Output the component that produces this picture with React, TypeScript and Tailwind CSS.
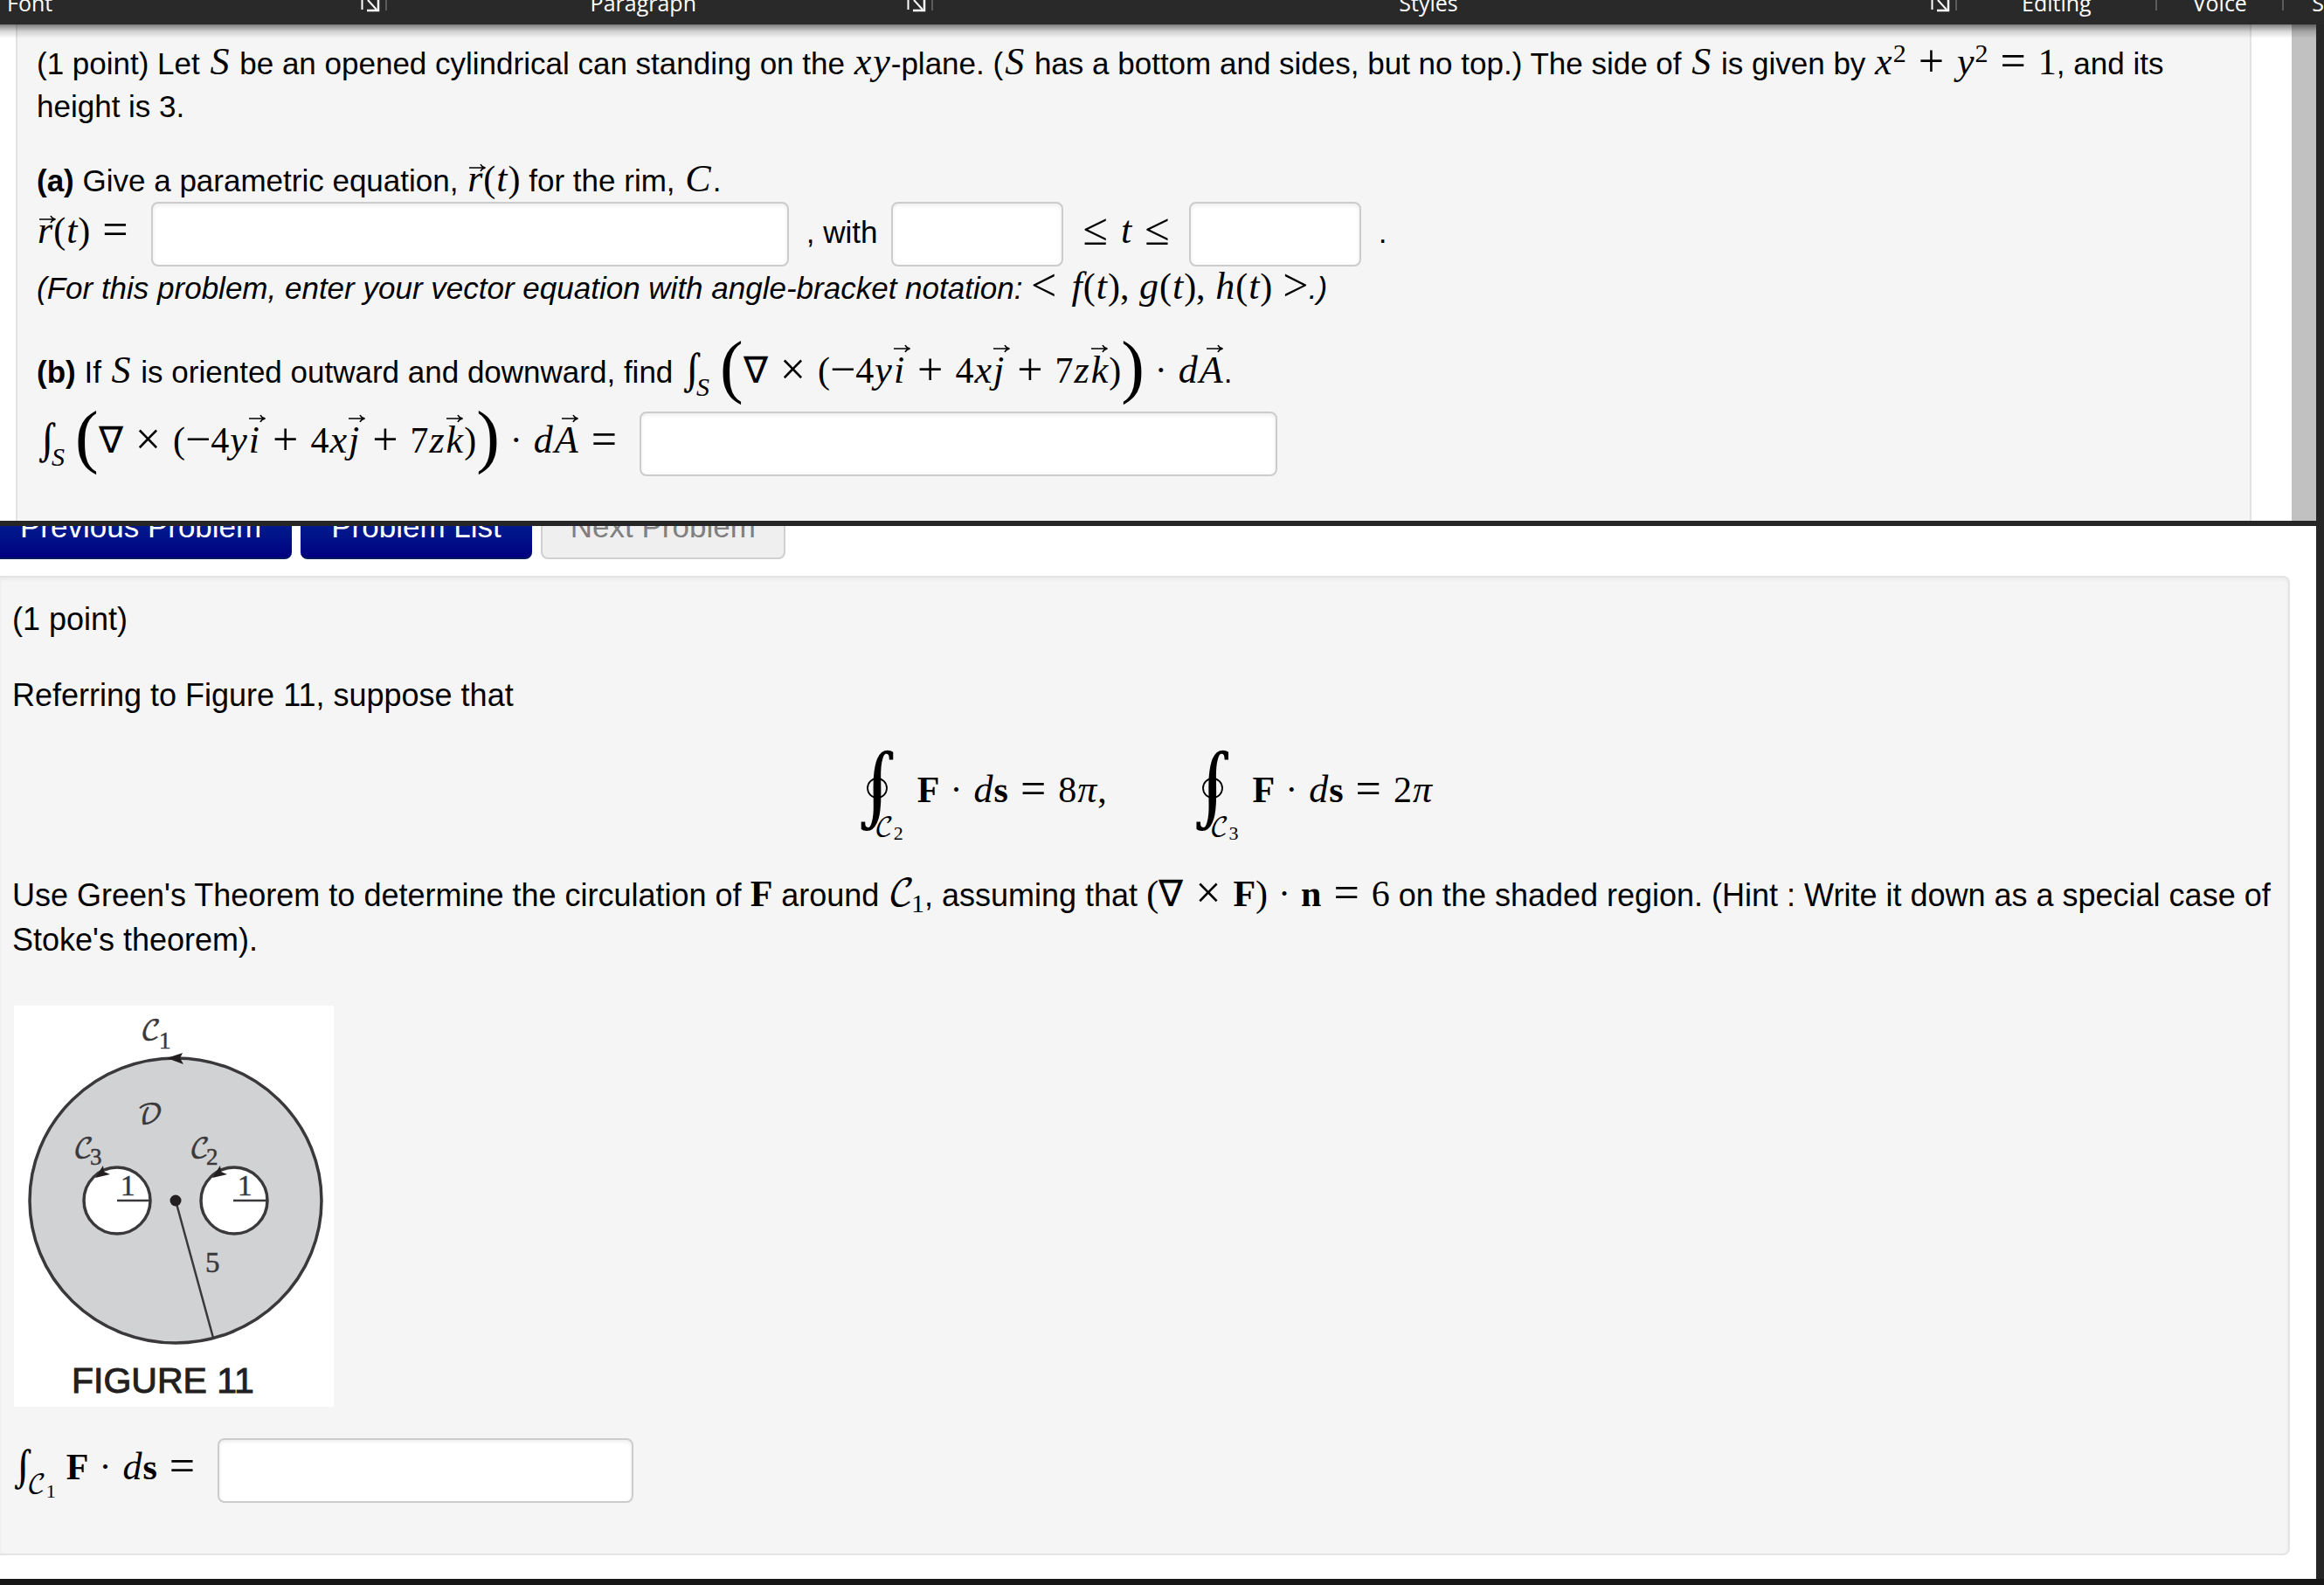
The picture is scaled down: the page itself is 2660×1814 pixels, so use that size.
import type { ReactNode } from 'react';

const ribbonGroups = [
  { label: 'Font', launcher: true },
  { label: 'Paragraph', launcher: true },
  { label: 'Styles', launcher: true },
  { label: 'Editing', launcher: false },
  { label: 'Voice', launcher: false },
];

const Launcher = () => (
  <svg width="22" height="14" viewBox="0 0 22 14" fill="none" stroke="#fff" strokeWidth="2">
    <path d="M1.5 0V11" />
    <path d="M8 0L18 11" />
    <path d="M20 0V12H7" strokeWidth="2.500" />
  </svg>
);

const Ribbon = () => (
  <header className="grid h-7 grid-cols-[443fr_625fr_1173fr_229fr_145fr_45fr] overflow-hidden bg-[#292929] font-['Open_Sans','Noto_Sans',sans-serif] text-[25px] leading-7 text-white">
    {ribbonGroups.map((group) => (
      <div key={group.label} className="flex items-start">
        <span className={group.label === 'Font' ? '-mt-[11px] flex-1 pl-2' : '-mt-[11px] flex-1 text-center'}>
          {group.label}
        </span>
        {group.launcher && (
          <span className="mr-1.5 ml-2">
            <Launcher />
          </span>
        )}
        <span className="h-3 w-0.5 bg-[#5c5c5c]" />
      </div>
    ))}
    <span className="-mt-[11px] pl-8">S</span>
  </header>
);

/* ---------- math pieces ---------- */

const MathText = ({ children }: { children: ReactNode }) => (
  <span className="inline-block font-['Liberation_Serif',serif] text-[42px] leading-none whitespace-nowrap">{children}</span>
);

const Var = ({ children }: { children: ReactNode }) => <i className="mx-px text-[44px] leading-[0]">{children}</i>;

const Cap = ({ children }: { children: ReactNode }) => <i className="mx-0.5 text-[44px] leading-[0]">{children}</i>;

const VecArrow = () => (
  <svg className="block" width="20" height="10" viewBox="0 0 20 10" fill="none" stroke="currentColor" strokeWidth="1.6">
    <path d="M0 5H18M13 1C14 3 16 4.500 18.500 5C16 5.500 14 7 13 9" />
  </svg>
);

const Vec = ({ children, arrow = '-top-2 left-0' }: { children: ReactNode; arrow?: string }) => (
  <span className="relative mx-px inline-block text-[44px] leading-none italic">
    {children}
    <span className={`absolute ${arrow}`}>
      <VecArrow />
    </span>
  </span>
);

const Rel = ({ children }: { children: ReactNode }) => (
  <span className="mx-3.5 align-[-2px] text-[52px] leading-[0]">{children}</span>
);

const Dot = () => <span className="mx-3">·</span>;

const Sup = ({ children }: { children: ReactNode }) => (
  <sup className="static align-[14px] text-[30px] leading-[0]">{children}</sup>
);

const Script = ({ children }: { children: ReactNode }) => (
  <span className="font-['DejaVu_Math_TeX_Gyre','DejaVu_Serif',serif] leading-[0]">{children}</span>
);

const Integral = ({ children }: { children: ReactNode }) => (
  <span className="mr-3">
    <Script>∫</Script>
    <sub className="static -ml-2 align-[-15px] text-[30px] leading-[0]">{children}</sub>
  </span>
);

const BigParen = ({ children }: { children: ReactNode }) => (
  <span className="align-[-8px] text-[80px] leading-[0]">{children}</span>
);

const FluxIntegrand = () => (
  <MathText>
    <Integral>
      <i>S</i>
    </Integral>
    <BigParen>(</BigParen>∇<Rel>×</Rel>(<span className="align-[-2px] text-[52px] leading-[0]">−</span>4<Var>y</Var>
    <Vec>i</Vec>
    <Rel>+</Rel>4<Var>x</Var>
    <Vec>j</Vec>
    <Rel>+</Rel>7<Var>z</Var>
    <Vec>k</Vec>)<BigParen>)</BigParen>
    <Dot />
    <Var>d</Var>
    <Vec arrow="-top-2 left-2">A</Vec>
  </MathText>
);

const FdotDs = () => (
  <>
    <b>F</b>
    <Dot />
    <Var>d</Var>
    <b>s</b>
    <Rel>=</Rel>
  </>
);

const Circulation = ({ index, value }: { index: string; value: ReactNode }) => (
  <MathText>
    <span className="relative inline-block align-[-10px] text-[84px] leading-none">
      <span className="font-['DejaVu_Math_TeX_Gyre','DejaVu_Serif',serif]">∫</span>
      <svg
        className="absolute top-1/2 left-1/2 -translate-1/2"
        width="26"
        height="26"
        viewBox="0 0 26 26"
        fill="none"
        stroke="currentColor"
        strokeWidth="1.8"
      >
        <circle cx="13" cy="13" r="11" />
      </svg>
    </span>
    <sub className="static mr-4 -ml-7 align-[-38px] text-[30px] leading-[0]">
      <Script>𝒞</Script>
      <sub className="static align-[-5px] text-[22px] leading-[0]">{index}</sub>
    </sub>
    <FdotDs />
    {value}
  </MathText>
);

/* ---------- form pieces ---------- */

const Answer = ({ label, width }: { label: string; width: string }) => (
  <input
    type="text"
    aria-label={label}
    className={`${width} h-[74px] rounded-lg border-2 border-[#ccc] bg-white px-3 pb-1 shadow-[inset_0_2px_4px_rgba(0,0,0,0.08)] outline-none`}
  />
);

const CylinderProblem = () => (
  <section className="relative flex overflow-hidden bg-white pl-[18px]">
    <div className="flex-1 border-x-2 border-[#e3e3e3] bg-[#f5f5f5] pt-5 pb-[51px] pl-[22px] text-[35px] leading-[49px]">
      <p className="pr-20">
        (1 point) Let <MathText><Cap>S</Cap></MathText> be an opened cylindrical can standing on the{' '}
        <MathText><Var>x</Var><Var>y</Var></MathText>-plane. (<MathText><Cap>S</Cap></MathText> has a bottom and sides, but no
        top.) The side of <MathText><Cap>S</Cap></MathText> is given by{' '}
        <MathText>
          <Var>x</Var>
          <Sup>2</Sup>
          <Rel>+</Rel>
          <Var>y</Var>
          <Sup>2</Sup>
          <Rel>=</Rel>1
        </MathText>
        , and its height is 3.
      </p>
      <p className="mt-9">
        <b>(a)</b> Give a parametric equation,{' '}
        <MathText>
          <Vec arrow="top-1 left-0.5">r</Vec>(<Var>t</Var>)
        </MathText>{' '}
        for the rim, <MathText><Cap>C</Cap></MathText>.
      </p>
      <div className="flex items-baseline">
        <MathText>
          <Vec arrow="top-1 left-0.5">r</Vec>(<Var>t</Var>)<Rel>=</Rel>
        </MathText>
        <span className="ml-3 flex items-baseline">
          <Answer label="r(t)" width="w-[730px]" />
        </span>
        <span className="mr-4 ml-5">, with</span>
        <Answer label="lower bound of t" width="w-[197px]" />
        <span className="mx-2">
          <MathText>
            <Rel>≤</Rel>
            <Var>t</Var>
            <Rel>≤</Rel>
          </MathText>
        </span>
        <Answer label="upper bound of t" width="w-[197px]" />
        <span className="ml-5">.</span>
      </div>
      <p className="italic">
        (For this problem, enter your vector equation with angle-bracket notation:{' '}
        <MathText>
          <span className="not-italic">
            <span className="mr-4 align-[-2px] text-[52px] leading-[0]">&lt;</span>
            <Var>f</Var>(<Var>t</Var>), <Var>g</Var>(<Var>t</Var>), <Var>h</Var>(<Var>t</Var>)
            <span className="ml-3 align-[-2px] text-[52px] leading-[0]">&gt;</span>
          </span>
        </MathText>
        .)
      </p>
      <p className="mt-[47px]">
        <b>(b)</b> If <MathText><Cap>S</Cap></MathText> is oriented outward and downward, find <FluxIntegrand />.
      </p>
      <div className="mt-[21px] flex items-baseline">
        <FluxIntegrand />
        <MathText>
          <Rel>=</Rel>
        </MathText>
        <span className="ml-3 flex items-baseline">
          <Answer label="flux integral" width="w-[730px]" />
        </span>
      </div>
    </div>
    <div className="ml-[46px] w-7 bg-[#c1c1c1]" />
    <div className="absolute inset-x-0 top-0 h-4 bg-gradient-to-b from-black/50 via-black/15 to-transparent" />
  </section>
);

const Figure = () => (
  <svg className="block" width="366" height="459" viewBox="0 0 366 459" role="img" aria-label="Figure 11">
    <rect width="366" height="459" fill="#fff" />
    <g stroke="#3a383a" strokeWidth="3.500" fill="none">
      <ellipse cx="185" cy="223" rx="167" ry="163" fill="#d1d2d4" />
      <circle cx="118" cy="223" r="38" fill="#fff" />
      <circle cx="252" cy="223" r="38" fill="#fff" />
      <path d="M118 223H156M251 223H289M185 223L228 380" strokeWidth="2.500" />
    </g>
    <g fill="#231f20">
      <circle cx="185" cy="223" r="6.500" />
      <path d="M175 60L193 54L190 60L194 67Z" />
      <path d="M93 197L102 183L103 190L110 193Z" />
      <path d="M227 197L236 183L237 190L244 193Z" />
    </g>
    <g fill="#3a383a" stroke="#3a383a" strokeWidth="0.500" className="font-['DejaVu_Math_TeX_Gyre','DejaVu_Serif',serif]" fontSize="32">
      <text x="145" y="39">𝒞</text>
      <text x="141" y="135">𝒟</text>
      <text x="68" y="174">𝒞</text>
      <text x="201" y="174">𝒞</text>
    </g>
    <g fill="#3a383a" stroke="#3a383a" strokeWidth="0.500" className="font-['Liberation_Serif',serif]" fontSize="27">
      <text x="166" y="49">1</text>
      <text x="87" y="182">3</text>
      <text x="220" y="182">2</text>
      <text x="122" y="217" fontSize="33">1</text>
      <text x="256" y="217" fontSize="33">1</text>
      <text x="219" y="305" fontSize="33">5</text>
    </g>
    <text x="66" y="443" fontSize="41" fill="#231f20" stroke="#231f20" className="font-['Liberation_Sans',sans-serif]">
      FIGURE 11
    </text>
  </svg>
);

const GreenProblem = () => (
  <section className="bg-white pb-[27px]">
    <nav className="flex overflow-hidden text-[35px] leading-[50px]">
      <button className="-mt-9 -ml-3 rounded-lg border-b-2 border-[#001a5c] bg-gradient-to-b from-[#0a2b9c] to-[#000080] px-[35px] pt-3 pb-2.5 text-white">
        Previous Problem
      </button>
      <button className="-mt-9 ml-2.5 rounded-lg border-b-2 border-[#001a5c] bg-gradient-to-b from-[#0a2b9c] to-[#000080] px-[35px] pt-3 pb-2.5 text-white">
        Problem List
      </button>
      <button
        disabled
        className="-mt-9 ml-2.5 rounded-lg border-2 border-[#d0d0d0] bg-[#efefef] px-8 pt-2.5 pb-2.5 text-[#808080]"
      >
        Next Problem
      </button>
    </nav>
    <div className="mt-[19px] mr-[30px] rounded-r-lg border-2 border-l-0 border-[#e3e3e3] bg-[#f5f5f5] px-3.5 pt-[22px] pb-[58px] text-[36px] leading-[51px] shadow-[inset_0_2px_4px_rgba(0,0,0,0.05)]">
      <p>(1 point)</p>
      <p className="mt-9">Referring to Figure 11, suppose that</p>
      <div className="mt-5 flex h-[130px] items-center justify-center gap-24">
        <Circulation index="2" value={<>8<Var>π</Var>,</>} />
        <Circulation index="3" value={<>2<Var>π</Var></>} />
      </div>
      <p className="mt-7">
        Use Green's Theorem to determine the circulation of <MathText><b>F</b></MathText> around{' '}
        <MathText>
          <Script>𝒞</Script>
          <sub className="static -ml-1 align-[-7px] text-[30px] leading-[0]">1</sub>
        </MathText>
        , assuming that{' '}
        <MathText>
          (∇
          <Rel>×</Rel>
          <b>F</b>)<Dot />
          <b>n</b>
          <Rel>=</Rel>6
        </MathText>{' '}
        on the shaded region. (Hint : Write it down as a special case of Stoke's theorem).
      </p>
      <div className="mt-[50px] ml-0.5">
        <Figure />
      </div>
      <div className="mt-9 flex items-baseline">
        <MathText>
          <Integral>
            <Script>𝒞</Script>
            <sub className="static align-[-6px] text-[22px] leading-[0]">1</sub>
          </Integral>
          <FdotDs />
        </MathText>
        <span className="ml-3 flex items-baseline">
          <Answer label="circulation around C1" width="w-[476px]" />
        </span>
      </div>
    </div>
  </section>
);

export default function App() {
  return (
    <div className="min-h-screen bg-[#161616] font-['Liberation_Sans',sans-serif] text-black">
      <Ribbon />
      <main className="border-r-[9px] border-[#262626]">
        <CylinderProblem />
        <div className="h-1.5 bg-[#262626]" />
        <GreenProblem />
      </main>
    </div>
  );
}
